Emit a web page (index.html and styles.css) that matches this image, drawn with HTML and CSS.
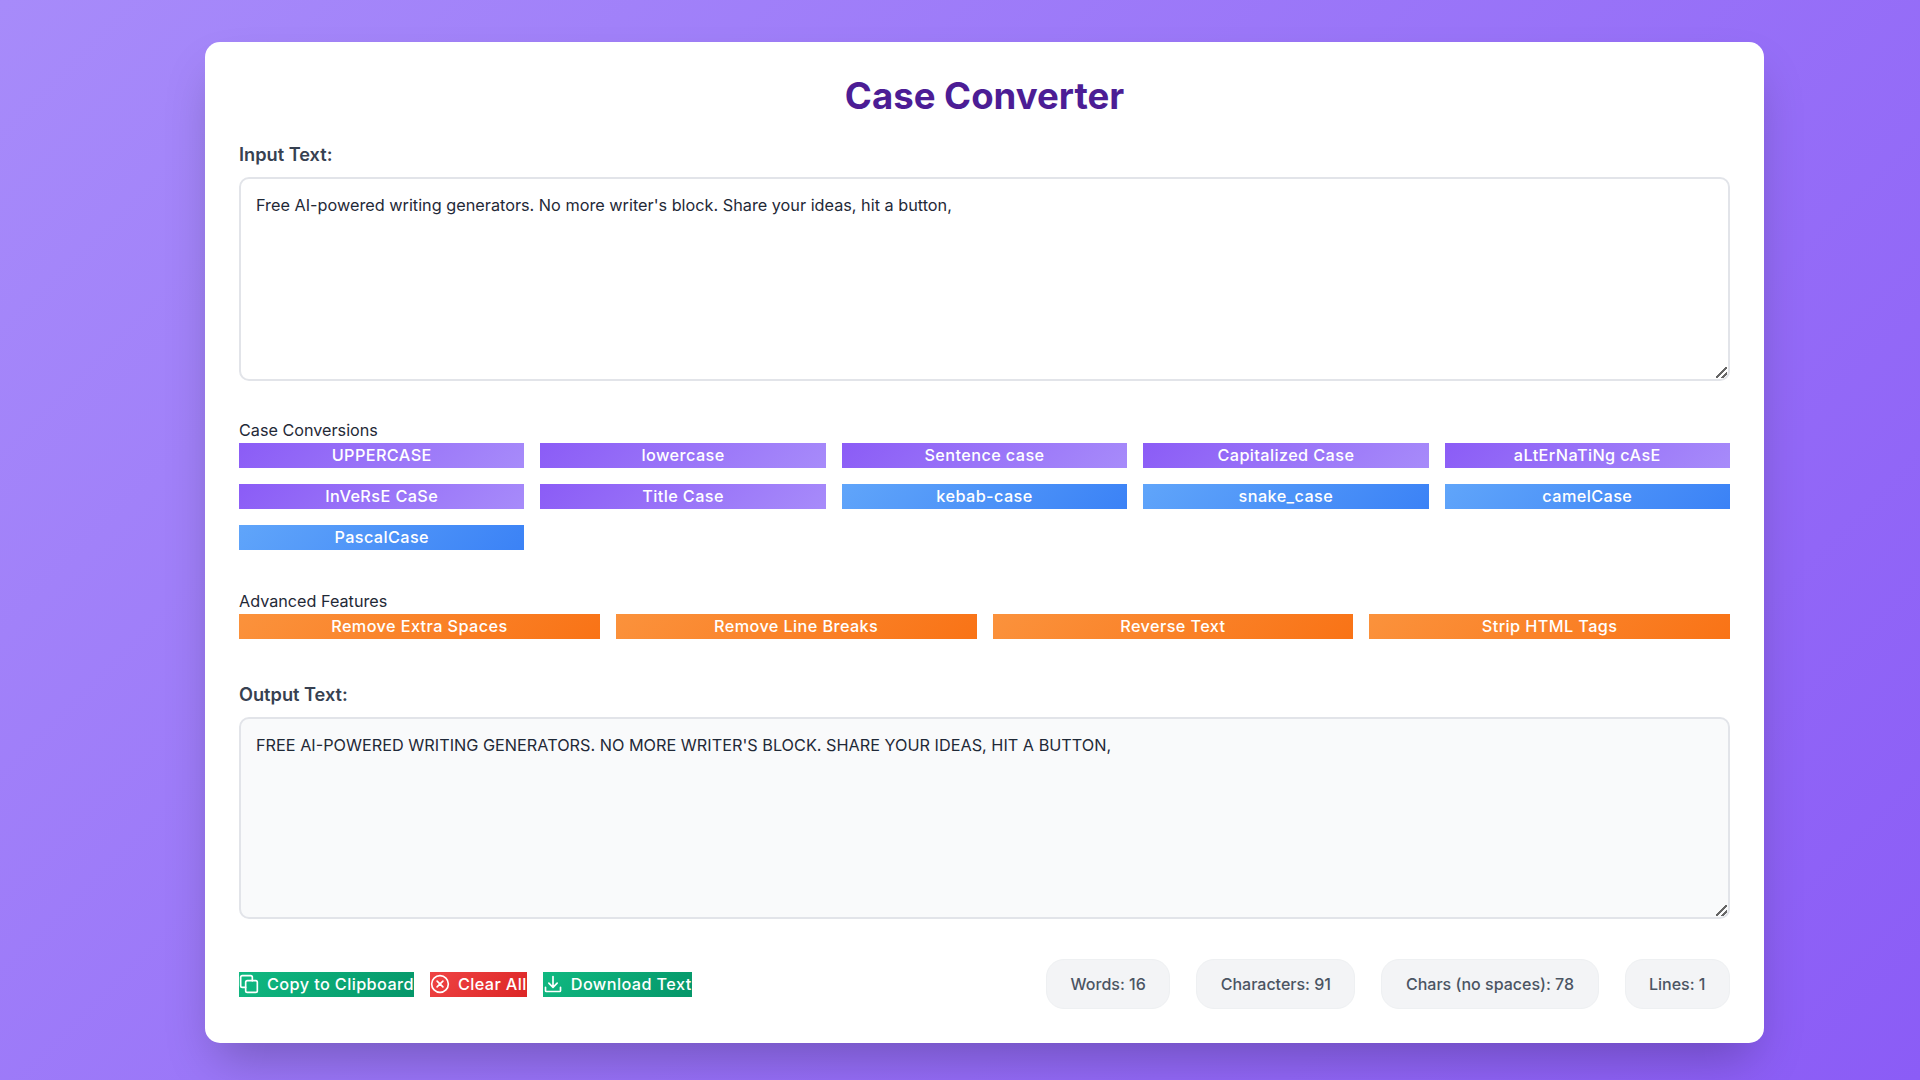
FILE: index.html
```html
<!DOCTYPE html>
<html lang="en">
<head>
  <meta charset="UTF-8">
  <meta name="viewport" content="width=device-width, initial-scale=1.0">
  <title>Case Converter</title>
  <link rel="stylesheet" href="styles.css">
</head>
<body>
  <div class="card">
    <h1 class="title">Case Converter</h1>

    <label class="field-label input-label" for="input">Input Text:</label>
    <textarea id="input" class="text-box">Free AI-powered writing generators. No more writer's block. Share your ideas, hit a button,</textarea>

    <div class="group group-case">
      <div class="group-title">Case Conversions</div>
      <div class="btn-grid five">
        <button class="btn purple">UPPERCASE</button>
        <button class="btn purple">lowercase</button>
        <button class="btn purple">Sentence case</button>
        <button class="btn purple">Capitalized Case</button>
        <button class="btn purple">aLtErNaTiNg cAsE</button>
        <button class="btn purple">InVeRsE CaSe</button>
        <button class="btn purple">Title Case</button>
        <button class="btn blue">kebab-case</button>
        <button class="btn blue">snake_case</button>
        <button class="btn blue">camelCase</button>
        <button class="btn blue">PascalCase</button>
      </div>
    </div>

    <div class="group group-advanced">
      <div class="group-title">Advanced Features</div>
      <div class="btn-grid four">
        <button class="btn orange">Remove Extra Spaces</button>
        <button class="btn orange">Remove Line Breaks</button>
        <button class="btn orange">Reverse Text</button>
        <button class="btn orange">Strip HTML Tags</button>
      </div>
    </div>

    <label class="field-label output-label" for="output">Output Text:</label>
    <textarea id="output" class="text-box output">FREE AI-POWERED WRITING GENERATORS. NO MORE WRITER'S BLOCK. SHARE YOUR IDEAS, HIT A BUTTON,</textarea>

    <div class="footer">
      <div class="actions">
        <button class="btn green icon-btn">
          <svg class="icon" viewBox="0 0 24 24"><rect x="8" y="8" width="14" height="14" rx="2"/><path d="M16 8V4a2 2 0 0 0-2-2H4a2 2 0 0 0-2 2v10a2 2 0 0 0 2 2h4"/></svg>
          Copy to Clipboard
        </button>
        <button class="btn red icon-btn">
          <svg class="icon" viewBox="0 0 24 24"><circle cx="12" cy="12" r="10"/><path d="M8.5 8.5l7 7M15.5 8.5l-7 7"/></svg>
          Clear All
        </button>
        <button class="btn green icon-btn">
          <svg class="icon" viewBox="0 0 24 24"><path d="M12 3v13M7 11l5 5 5-5M3 16v4a1 1 0 0 0 1 1h16a1 1 0 0 0 1-1v-4"/></svg>
          Download Text
        </button>
      </div>
      <div class="stats">
        <div class="stat">Words: 16</div>
        <div class="stat">Characters: 91</div>
        <div class="stat">Chars (no spaces): 78</div>
        <div class="stat">Lines: 1</div>
      </div>
    </div>
  </div>
</body>
</html>
```

FILE: styles.css
```css
*{
  margin:0;
  padding:0;
  box-sizing:border-box;
}

body{
  height:1080px;
  overflow:hidden;
  padding:42px 0 0 205px;
  background:linear-gradient(135deg,#a78bfa,#8b5cf6);
  font-family:Inter,"Liberation Sans",sans-serif;
  font-size:16px;
}

.card{
  width:1559px;
  height:1001px;
  padding:34px;
  background:#fff;
  border-radius:15px;
  box-shadow:0 25px 50px -12px rgba(0,0,0,0.25);
  display:flex;
  flex-direction:column;
}

.title{
  height:44px;
  margin-top:-2px;
  font-size:36.6px;
  line-height:44px;
  font-weight:700;
  text-align:center;
  color:#4c1d95;
}

.field-label{
  display:block;
  height:24px;
  line-height:24px;
  font-size:18.2px;
  font-weight:600;
  color:#374151;
}
.input-label{margin-top:24px;}
.output-label{margin-top:43px;}

.text-box{
  display:block;
  width:100%;
  height:204px;
  margin-top:11px;
  padding:14px 15px;
  border:2px solid #e2e4e9;
  border-radius:10px;
  font-family:inherit;
  font-size:16.26px;
  line-height:24px;
  color:#1f2937;
  background:#fff;
  outline:none;
}
.text-box.output{
  height:203px;
  background:#f9fafb;
}
.text-box::-webkit-resizer{
  background:linear-gradient(135deg,transparent 43%,#666 43%,#666 57%,transparent 57%,transparent 72%,#666 72%,#666 85%,transparent 85%) no-repeat right 1px bottom 1px / 11px 11px;
}

.group-title{
  height:24px;
  line-height:22px;
  font-size:16.2px;
  color:#1f2937;
}
.group-case{margin-top:38px;}
.group-advanced{margin-top:40px;}

.btn-grid{
  display:grid;
  gap:16px;
}
.btn-grid.five{grid-template-columns:repeat(5,1fr);}
.btn-grid.four{grid-template-columns:repeat(4,1fr);}

.btn{
  height:25px;
  padding-bottom:3px;
  border:none;
  color:#fff;
  font-family:inherit;
  font-size:16.25px;
  line-height:24px;
  font-weight:500;
  letter-spacing:0.4px;
  white-space:nowrap;
}
.purple{background:linear-gradient(135deg,#8b5cf6,#a78bfa);}
.blue{background:linear-gradient(135deg,#60a5fa,#3b82f6);}
.orange{background:linear-gradient(135deg,#fb923c,#f97316);}
.green{background:linear-gradient(135deg,#10b981,#059669);}
.red{background:linear-gradient(135deg,#ef4444,#dc2626);}

.footer{
  display:flex;
  justify-content:space-between;
  align-items:center;
  margin-top:40px;
}
.actions{
  display:flex;
  gap:16px;
}
.icon-btn{
  display:flex;
  align-items:center;
  gap:8px;
  padding-bottom:0;
}
.icon{
  width:20px;
  height:20px;
  fill:none;
  stroke:currentColor;
  stroke-width:2;
  stroke-linecap:round;
  stroke-linejoin:round;
}

.stats{
  display:flex;
  gap:26px;
}
.stat{
  height:50px;
  padding:0 23.5px;
  line-height:48px;
  background:#f3f4f6;
  border:1px solid #eef0f2;
  border-radius:18px;
  font-size:16px;
  font-weight:500;
  color:#4b5563;
}
```
